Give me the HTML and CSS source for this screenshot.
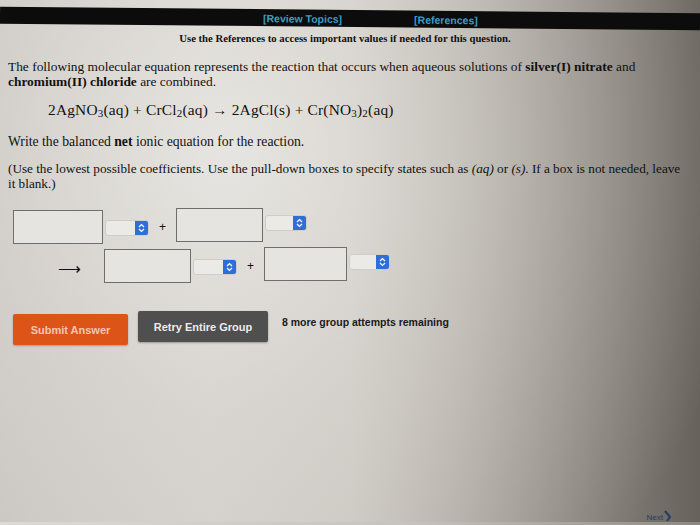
FILE: index.html
```html
<!DOCTYPE html>
<html>
<head>
<meta charset="utf-8">
<link rel="stylesheet" href="styles.css">
</head>
<body>
<div class="screen">
  <div class="topbar">
    <a class="link review">[Review Topics]</a>
    <a class="link refs">[References]</a>
  </div>
  <div class="note">Use the References to access important values if needed for this question.</div>
  <div class="content">
    <p class="para">The following molecular equation represents the reaction that occurs when aqueous solutions of <b>silver(I) nitrate</b> and <b>chromium(II) chloride</b> are combined.</p>
    <p class="eq">2AgNO<sub>3</sub>(aq) + CrCl<sub>2</sub>(aq) &rarr; 2AgCl(s) + Cr(NO<sub>3</sub>)<sub>2</sub>(aq)</p>
    <p class="para q1">Write the balanced <b>net</b> ionic equation for the reaction.</p>
    <p class="para q2">(Use the lowest possible coefficients. Use the pull-down boxes to specify states such as <i>(aq)</i> or <i>(s)</i>. If a box is not needed, leave it blank.)</p>

    <div class="answer">
      <div class="row row1">
        <div class="box b1"></div>
        <div class="sel s1"><span class="btn"><svg width="7" height="10" viewBox="0 0 7 10"><path d="M1 4 L3.5 1.5 L6 4 M1 6 L3.5 8.5 L6 6" fill="none" stroke="#fff" stroke-width="1.2"/></svg></span></div>
        <span class="plus p1">+</span>
        <div class="box b2"></div>
        <div class="sel s2"><span class="btn"><svg width="7" height="10" viewBox="0 0 7 10"><path d="M1 4 L3.5 1.5 L6 4 M1 6 L3.5 8.5 L6 6" fill="none" stroke="#fff" stroke-width="1.2"/></svg></span></div>
      </div>
      <div class="row row2">
        <span class="arrow">&#x27F6;</span>
        <div class="box b3"></div>
        <div class="sel s3"><span class="btn"><svg width="7" height="10" viewBox="0 0 7 10"><path d="M1 4 L3.5 1.5 L6 4 M1 6 L3.5 8.5 L6 6" fill="none" stroke="#fff" stroke-width="1.2"/></svg></span></div>
        <span class="plus p2">+</span>
        <div class="box b4"></div>
        <div class="sel s4"><span class="btn"><svg width="7" height="10" viewBox="0 0 7 10"><path d="M1 4 L3.5 1.5 L6 4 M1 6 L3.5 8.5 L6 6" fill="none" stroke="#fff" stroke-width="1.2"/></svg></span></div>
      </div>
    </div>

    <div class="actions">
      <button class="submit">Submit Answer</button>
      <button class="retry">Retry Entire Group</button>
      <span class="attempts">8 more group attempts remaining</span>
    </div>
  </div>
  <div class="nextnav"><span class="next">Next</span><svg width="8" height="12" viewBox="0 0 8 12"><path d="M1 1 L6 7 L3 11" fill="none" stroke="#1d3f63" stroke-width="2"/></svg></div>
  <div class="bottom"></div>
</div>
</body>
</html>
```
FILE: styles.css
```css
html, body {
  margin: 0;
  padding: 0;
  width: 700px;
  height: 525px;
  overflow: hidden;
}
body {
  background:
    radial-gradient(ellipse 520px 600px at 230px 150px, rgba(235,233,229,0.85) 0%, rgba(225,222,217,0.5) 45%, rgba(200,196,190,0) 100%),
    linear-gradient(to right, #c6c3be 0%, #cfccc7 30%, #c7c3bd 50%, #aea9a2 65%, #8b867f 82%, #67625b 100%);
  font-family: "Liberation Serif", "Times New Roman", serif;
  color: #111;
}
.screen {
  position: relative;
  box-sizing: border-box;
  width: 700px;
  height: 525px;
  padding-top: 10px;
}
.topbar {
  height: 17px;
  background: #0c0c0d;
  display: flex;
  align-items: center;
  font-family: "Liberation Sans", Arial, sans-serif;
  font-weight: bold;
  font-size: 10.5px;
  transform: rotate(0.55deg);
}
.link {
  color: #3d9cc4;
}
.review { margin-left: 263px; }
.refs { margin-left: 72px; }
.note {
  margin-top: 5px;
  text-align: center;
  font-weight: bold;
  font-size: 10.7px;
  padding-right: 10px;
}
.content {
  padding-left: 8px;
}
.para {
  margin: 0;
  font-size: 13.4px;
  line-height: 15px;
  width: 680px;
}
.para:first-child { margin-top: 15px; }
.eq {
  margin: 12px 0 0 40px;
  font-size: 15.4px;
  line-height: 18px;
  letter-spacing: 0.2px;
}
.eq sub { font-size: 11px; line-height: 0; vertical-align: -2px; }
.q1 { margin-top: 15px; font-size: 13.7px; }
.q2 { margin-top: 12px; width: 680px; font-size: 13.2px; }
.answer {
  margin-top: 19px;
  margin-left: 5px;
}
.row {
  display: flex;
  align-items: center;
}
.box {
  box-sizing: border-box;
  height: 34px;
  border: 1px solid #6f6e6c;
  background: #e6e4e1;
}
.b1 { width: 90px; }
.b2 { width: 87px; margin-top: -4px; }
.b3 { width: 87px; margin-left: 18px; }
.b4 { width: 83px; margin-top: -4px; }
.sel {
  box-sizing: border-box;
  width: 44px;
  height: 16px;
  margin-left: 2px;
  border: 1px solid #cfcdca;
  border-radius: 3px;
  background: #ebeae7;
  display: flex;
  justify-content: flex-end;
  overflow: hidden;
  margin-top: 2px;
}
.s2 { width: 42px; margin-top: -8px; }
.s4 { width: 41px; margin-top: -8px; }
.btn {
  width: 13px;
  height: 100%;
  background: #2d6ed8;
  display: flex;
  align-items: center;
  justify-content: center;
}
.plus {
  font-family: "Liberation Sans", Arial, sans-serif;
  font-size: 12px;
  width: 27px;
  text-align: center;
}
.row2 { margin-top: 5px; }
.arrow {
  margin-left: 45px;
  font-size: 16px;
  width: 28px;
  line-height: 16px;
  margin-top: 6px;
}
.p2 { width: 27px; }
.actions {
  margin-top: 28px;
  margin-left: 5px;
  display: flex;
  align-items: flex-start;
  font-family: "Liberation Sans", Arial, sans-serif;
}
.actions button {
  font-family: "Liberation Sans", Arial, sans-serif;
  font-weight: bold;
  font-size: 11px;
  border: none;
  border-radius: 2px;
  padding: 0;
}
.submit {
  width: 115px;
  height: 31px;
  margin-top: 3px;
  background: #dd5418;
  color: #f2c7b2;
  box-shadow: 0 1px 2px rgba(0,0,0,0.25);
}
.retry {
  width: 130px;
  height: 31px;
  margin-left: 10px;
  background: #4f4f4f;
  color: #ececec;
  box-shadow: 0 1px 2px rgba(0,0,0,0.3);
}
.attempts {
  margin-left: 14px;
  margin-top: 5px;
  font-weight: bold;
  font-size: 10.5px;
  color: #1a1a1a;
}
.nextnav {
  position: absolute;
  right: 28px;
  bottom: 3px;
  display: flex;
  align-items: flex-end;
  gap: 1px;
}
.next {
  font-family: "Liberation Sans", Arial, sans-serif;
  font-size: 8px;
  line-height: 8px;
  color: #1f3f60;
}
.bottom {
  position: absolute;
  left: 0;
  bottom: 0;
  width: 700px;
  height: 3px;
  background: linear-gradient(to right, #dcdad6, #c5c2bd 60%, #8d8982);
}
```
